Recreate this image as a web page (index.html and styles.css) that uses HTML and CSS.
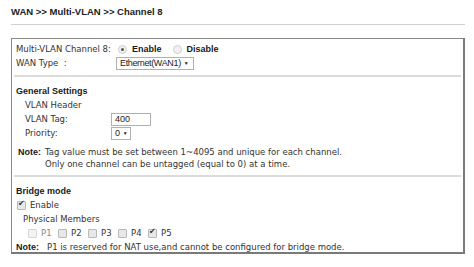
FILE: index.html
```html
<!DOCTYPE html>
<html lang="en">
<head>
    <meta charset="UTF-8" />
    <title>Multi-VLAN</title>
    <link rel="stylesheet" href="styles.css">
</head>
<body>
    <div class="page-title">WAN &gt;&gt; Multi-VLAN &gt;&gt; Channel 8</div>
    <div class="title-line"></div>

    <div class="panel">
        <div class="section">
            <div class="row">
                <span class="label top-label">Multi-VLAN Channel 8:</span>
                <label class="opt"><span class="radio on"></span><b>Enable</b></label>
                <label class="opt"><span class="radio"></span><b>Disable</b></label>
            </div>
            <div class="row">
                <span class="label wan-label">WAN Type &nbsp;:</span>
                <span class="select wan-select">Ethernet(WAN1) <i>▼</i></span>
            </div>
        </div>

        <div class="section">
            <div class="row head">General Settings</div>
            <div class="row sub">VLAN Header</div>
            <div class="row sub">
                <span class="label sub-label">VLAN Tag:</span>
                <span class="input">400</span>
            </div>
            <div class="row sub">
                <span class="label sub-label">Priority:</span>
                <span class="select small-select">0 <i>▼</i></span>
            </div>
            <div class="note">
                <b>Note:</b>
                <div class="note-text">
                    Tag value must be set between 1~4095 and unique for each channel.<br>
                    Only one channel can be untagged (equal to 0) at a time.
                </div>
            </div>
        </div>

        <div class="section last">
            <div class="row head">Bridge mode</div>
            <div class="row"><span class="check on"></span>Enable</div>
            <div class="row members">Physical Members</div>
            <div class="row ports">
                <span class="port"><span class="check off"></span>P1</span>
                <span class="port"><span class="check"></span>P2</span>
                <span class="port"><span class="check"></span>P3</span>
                <span class="port"><span class="check"></span>P4</span>
                <span class="port"><span class="check on"></span>P5</span>
            </div>
            <div class="row bottom-note"><b>Note:</b><span>P1 is reserved for NAT use,and cannot be configured for bridge mode.</span></div>
        </div>
    </div>
</body>
</html>
```

FILE: styles.css
```css
body {
    margin: 0;
    padding: 7px 9px 0 11px;
    background-color: #fff;
    font-family: 'DejaVu Sans', Verdana, sans-serif;
    font-size: 8.5px;
    color: #333;
}

b {
    font-family: 'Liberation Sans', Arial, sans-serif;
    font-weight: bold;
    font-size: 9px;
    color: #1a1a1a;
}

.page-title {
    font-family: 'Liberation Sans', Arial, sans-serif;
    font-weight: bold;
    font-size: 9.5px;
    color: #222;
    height: 12px;
    line-height: 10px;
}

.title-line {
    height: 1px;
    background-color: #cfcfcf;
    margin: 5px 0 0 0;
}

.panel {
    margin-top: 13px;
    border: 1px solid #8a8a8a;
    border-right: 2px solid #7a7a7a;
    border-bottom: 2px solid #7a7a7a;
    padding: 0 2px;
    height: 216px;
    box-sizing: border-box;
}

.section {
    border-bottom: 2px solid #dcdcdc;
    padding: 3px 2px 5px;
}

.section.last {
    border-bottom: none;
    padding-bottom: 0;
}

.row {
    display: flex;
    align-items: center;
    height: 14px;
}

.label {
    display: inline-block;
    flex: none;
}

.top-label,
.wan-label {
    width: 100px;
}

.head {
    font-family: 'Liberation Sans', Arial, sans-serif;
    font-weight: bold;
    font-size: 9px;
    color: #1a1a1a;
    height: 15px;
    margin-top: 3px;
}

.sub {
    padding-left: 9px;
}

.sub-label {
    width: 86px;
}

.opt {
    display: inline-flex;
    align-items: center;
    margin-right: 9px;
}

.radio {
    width: 7px;
    height: 7px;
    border-radius: 50%;
    border: 1px solid #cfcfcf;
    background-color: #f1f1f1;
    margin: 0 5px 0 2px;
    position: relative;
}

.radio.on::after {
    content: "";
    position: absolute;
    left: 2px;
    top: 2px;
    width: 3px;
    height: 3px;
    border-radius: 50%;
    background-color: #555;
}

.select {
    display: inline-flex;
    align-items: center;
    flex: none;
    box-sizing: border-box;
    border: 1px solid #b0b0b0;
    height: 13px;
    padding: 0 3px;
    font-family: 'Liberation Sans', Arial, sans-serif;
    font-size: 9px;
    letter-spacing: -0.35px;
    color: #222;
}

.select i {
    font-style: normal;
    font-size: 5px;
    margin-left: 3px;
}

.wan-select {
    width: 78px;
}

.small-select {
    width: 20px;
}

.input {
    display: inline-block;
    flex: none;
    box-sizing: border-box;
    border: 1px solid #b0b0b0;
    width: 40px;
    height: 13px;
    line-height: 11px;
    padding-left: 3px;
    font-family: 'Liberation Sans', Arial, sans-serif;
    font-size: 9px;
    color: #222;
}

.note {
    display: flex;
    margin-top: 6px;
    padding-left: 2px;
    line-height: 12px;
}

.note b {
    width: 27px;
    flex: none;
}

.check {
    display: inline-block;
    width: 7px;
    height: 7px;
    border: 1px solid #b8b8b8;
    background-color: #e8e8e8;
    border-radius: 1px;
    margin: 0 4px 0 1px;
    position: relative;
}

.check.on::after {
    content: "✔";
    position: absolute;
    left: 0;
    top: -3px;
    font-size: 8px;
    color: #333;
}

.check.off {
    background-color: #f3f3f3;
    border-color: #d6d6d6;
}

.members {
    padding-left: 7px;
}

.ports {
    padding-left: 11px;
}

.port {
    display: inline-flex;
    align-items: center;
    width: 30px;
}

.port:first-child {
    color: #888;
}

.bottom-note b {
    width: 31px;
    flex: none;
}
```
